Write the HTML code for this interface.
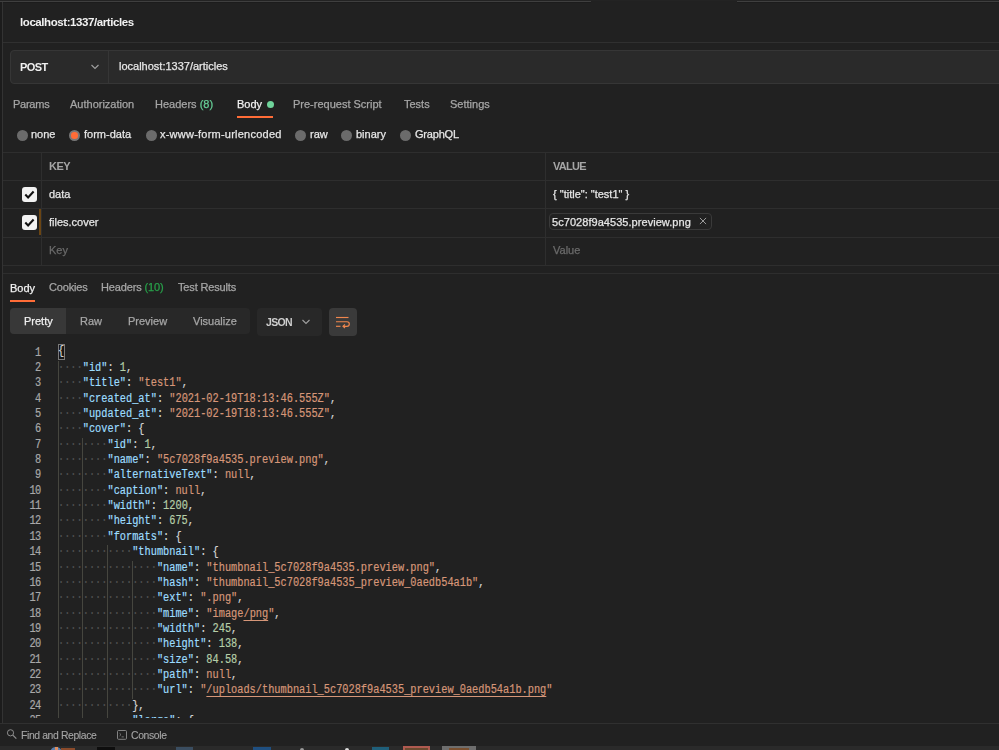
<!DOCTYPE html>
<html><head><meta charset="utf-8">
<style>
*{box-sizing:border-box;margin:0;padding:0}
html,body{width:999px;height:750px;overflow:hidden;background:#212121;font-family:"Liberation Sans",sans-serif;font-size:11px;color:#e6e6e6;-webkit-text-stroke:0.25px currentColor}
.a{position:absolute;white-space:pre}
.hl{position:absolute;height:1px;background:#2e2e2e}
.vl{position:absolute;width:1px;background:#2e2e2e}
.tab{position:absolute;top:97px;line-height:14px;color:#a6a6a6}
.radio{position:absolute;top:129.7px;width:11px;height:11px;border-radius:50%;background:#6b6b6b}
.rl{position:absolute;top:127px;line-height:14px;color:#e6e6e6}
.cb{position:absolute;left:22px;width:15px;height:15px;border-radius:3px;background:#f2f2f2}
.code{position:absolute;left:0;top:339.5px;width:999px;height:378.5px;overflow:hidden;font-family:"Liberation Mono",monospace;font-size:12px;-webkit-text-stroke:0.2px currentColor}
.ln{position:absolute;left:0;width:40.5px;text-align:right;color:#a8a8a8;height:15.36px;line-height:15.36px;letter-spacing:-0.9px;transform:scaleX(0.86);transform-origin:39.5px 0;margin-left:-0.5px}
.cl{position:absolute;left:58px;height:15.36px;line-height:15.36px;white-space:pre;color:#d4d4d4;transform:scaleX(0.8583);transform-origin:0 0}
.k{color:#9cdcfe}.s{color:#d69678}.n{color:#b5cea8}.w{color:#505050}
.u{text-decoration:underline;text-decoration-color:#d69678;text-underline-offset:2.5px}
body>div.a,body>div.tab,body>div.rl{will-change:transform}
.g{position:absolute;width:1px;background:#46463f}
</style></head><body>
<!-- top tab strip line -->
<div class="hl" style="left:0;top:0;width:999px;background:#232323"></div>
<div class="hl" style="left:0;top:1px;width:591px;background:#3f3f3f"></div>
<div class="hl" style="left:0;top:2px;width:591px;background:#1c1c1c"></div>
<div class="hl" style="left:737px;top:1px;width:262px;background:#3f3f3f"></div>
<div class="hl" style="left:737px;top:2px;width:262px;background:#1c1c1c"></div>
<!-- left border -->
<div class="vl" style="left:0;top:2px;width:2px;height:721px;background:#1c1c1c"></div>
<div class="vl" style="left:2px;top:2px;height:721px;background:#333"></div>

<!-- header -->
<div class="a" style="left:19.5px;top:14.5px;font-weight:bold;-webkit-text-stroke:0;font-size:11.5px;line-height:14px;color:#f2f2f2;letter-spacing:-0.42px">localhost:1337/articles</div>
<div class="hl" style="left:3px;top:42px;width:996px;background:#303030"></div>

<!-- request bar -->
<div class="a" style="left:10px;top:50px;width:1000px;height:34px;border:1px solid #363636;border-radius:4px;background:#2a2a2a"></div>
<div class="vl" style="left:108px;top:51px;height:32px;background:#363636"></div>
<div class="a" style="left:19.5px;top:59.5px;font-weight:bold;-webkit-text-stroke:0;line-height:14px;color:#f0f0f0;letter-spacing:-0.6px">POST</div>
<svg class="a" style="left:90px;top:62.7px" width="10" height="8" viewBox="0 0 10 8"><path d="M1.5 2 L5 5.5 L8.5 2" fill="none" stroke="#a0a0a0" stroke-width="1.1"/></svg>
<div class="a" style="left:118.5px;top:59px;line-height:14px;color:#e6e6e6">localhost:1337/articles</div>

<!-- request tabs -->
<div class="tab" style="left:13.3px;letter-spacing:-0.25px">Params</div>
<div class="tab" style="left:70px">Authorization</div>
<div class="tab" style="left:155px">Headers <span style="color:#66cf96">(8)</span></div>
<div class="tab" style="left:237px;color:#f0f0f0">Body</div>
<div class="a" style="left:266.5px;top:100.5px;width:7px;height:7px;border-radius:50%;background:#6fd49b"></div>
<div class="a" style="left:237px;top:116px;width:36px;height:2px;background:#ff6c37"></div>
<div class="tab" style="left:293px">Pre-request Script</div>
<div class="tab" style="left:403.5px">Tests</div>
<div class="tab" style="left:449.8px">Settings</div>

<!-- body type radios -->
<div class="radio" style="left:16.5px"></div><div class="rl" style="left:31px">none</div>
<div class="radio" style="left:69.1px;background:#777"></div><div class="a" style="left:72px;top:132px;width:4px;height:4px"></div>
<div class="a" style="left:71.3px;top:131.9px;width:6.6px;height:6.6px;border-radius:50%;background:#ff6c37"></div>
<div class="rl" style="left:84px">form-data</div>
<div class="radio" style="left:145.5px"></div><div class="rl" style="left:160px;letter-spacing:0.23px">x-www-form-urlencoded</div>
<div class="radio" style="left:294.9px"></div><div class="rl" style="left:310px">raw</div>
<div class="radio" style="left:341.2px"></div><div class="rl" style="left:356px">binary</div>
<div class="radio" style="left:399.5px"></div><div class="rl" style="left:415px;letter-spacing:-0.2px">GraphQL</div>

<!-- table -->
<div class="hl" style="left:3px;top:152px;width:996px"></div>
<div class="hl" style="left:3px;top:180px;width:996px"></div>
<div class="hl" style="left:3px;top:208px;width:996px"></div>
<div class="hl" style="left:3px;top:237px;width:996px"></div>
<div class="hl" style="left:3px;top:265px;width:996px"></div>
<div class="vl" style="left:41px;top:152px;height:113px"></div>
<div class="vl" style="left:545px;top:152px;height:113px"></div>
<div class="a" style="left:48.5px;top:159px;line-height:14px;font-weight:bold;-webkit-text-stroke:0;color:#a6a6a6;letter-spacing:-0.5px">KEY</div>
<div class="a" style="left:552.5px;top:159px;line-height:14px;font-weight:bold;-webkit-text-stroke:0;color:#a6a6a6;letter-spacing:-0.7px">VALUE</div>
<div class="cb" style="top:187px"></div><svg class="a" style="left:22px;top:187px" width="15" height="15" viewBox="0 0 15 15"><path d="M3.3 7.6 L6.1 10.4 L11.6 4.5" fill="none" stroke="#111" stroke-width="2.1"/></svg>
<div class="cb" style="top:215px"></div><svg class="a" style="left:22px;top:215px" width="15" height="15" viewBox="0 0 15 15"><path d="M3.3 7.6 L6.1 10.4 L11.6 4.5" fill="none" stroke="#111" stroke-width="2.1"/></svg>
<div class="a" style="left:39px;top:209px;width:2px;height:26px;background:#6b4513"></div>
<div class="a" style="left:49.3px;top:187px;line-height:14px">data</div>
<div class="a" style="left:49.3px;top:215px;line-height:14px">files.cover</div>
<div class="a" style="left:49.3px;top:243px;line-height:14px;color:#6b6b6b">Key</div>
<div class="a" style="left:552.8px;top:187px;line-height:14px">{ "title": "test1" }</div>
<div class="a" style="left:549px;top:213px;width:163px;height:17px;border:1px solid #3a3a3a;border-radius:4px"></div>
<div class="a" style="left:551.8px;top:215px;line-height:14px;letter-spacing:0.05px">5c7028f9a4535.preview.png</div>
<svg class="a" style="left:698.5px;top:217px" width="8" height="8" viewBox="0 0 8 8"><path d="M0.9 0.9 L7.1 7.1 M7.1 0.9 L0.9 7.1" stroke="#b0b0b0" stroke-width="0.85"/></svg>
<div class="a" style="left:553px;top:243px;line-height:14px;color:#6b6b6b">Value</div>
<div class="hl" style="left:3px;top:273px;width:996px"></div>

<!-- response tabs -->
<div class="tab" style="left:10px;top:280.6px;color:#f0f0f0">Body</div>
<div class="a" style="left:10px;top:300px;width:25px;height:2px;background:#ff6c37"></div>
<div class="tab" style="left:48.5px;top:280.25px;letter-spacing:-0.15px">Cookies</div>
<div class="tab" style="left:101px;top:280.25px;letter-spacing:-0.15px">Headers <span style="color:#28a04a">(10)</span></div>
<div class="tab" style="left:178px;top:280.25px;letter-spacing:-0.15px">Test Results</div>


<!-- segmented control -->
<div class="a" style="left:10px;top:308px;width:240px;height:26px;border-radius:4px;background:#282828"></div>
<div class="a" style="left:10px;top:308px;width:56px;height:26px;border-radius:4px 0 0 4px;background:#383838"></div>
<div class="a" style="left:24px;top:314px;line-height:14px;color:#f0f0f0">Pretty</div>
<div class="a" style="left:80px;top:314px;line-height:14px;color:#a6a6a6">Raw</div>
<div class="a" style="left:128px;top:314px;line-height:14px;color:#a6a6a6">Preview</div>
<div class="a" style="left:193px;top:314px;line-height:14px;color:#a6a6a6">Visualize</div>
<!-- JSON dropdown -->
<div class="a" style="left:257px;top:308px;width:65px;height:28px;border-radius:4px;background:#282828"></div>
<div class="a" style="left:266px;top:315px;line-height:14px;font-weight:bold;-webkit-text-stroke:0;color:#cfcfcf;font-size:10.5px;letter-spacing:-0.7px">JSON</div>
<svg class="a" style="left:301px;top:318px" width="10" height="8" viewBox="0 0 10 8"><path d="M1.5 2 L5 5.5 L8.5 2" fill="none" stroke="#a0a0a0" stroke-width="1.1"/></svg>
<!-- wrap button -->
<div class="a" style="left:328.5px;top:308px;width:27.5px;height:28px;border-radius:4px;background:#3a3a3a"></div>
<svg class="a" style="left:328px;top:308px" width="28" height="27" viewBox="0 0 28 27"><g fill="none" stroke="#f0874e" stroke-width="1.15"><path d="M8 9.5 H20.5"/><path d="M8 13.7 H19 a2.3 2.3 0 0 1 0 4.6 H15.5"/><path d="M17 16.5 L15 18.3 L17 20"/><path d="M8 18.3 H12.5"/></g></svg>

<!-- code -->
<div class="code" id="code">
<div class="a" style="left:58px;top:4.5px;width:6.5px;height:16px;border:1px solid #7a7a7a;background:#161616"></div>
<div class="ln" style="top:6.00px">1</div>
<div class="cl" style="top:6.00px"><span style="position:relative;top:-1.5px">{</span></div>
<div class="ln" style="top:21.36px">2</div>
<div class="cl" style="top:21.36px"><span class="w">····</span><span class="k">"id"</span>: <span class="n">1</span>,</div>
<div class="ln" style="top:36.72px">3</div>
<div class="cl" style="top:36.72px"><span class="w">····</span><span class="k">"title"</span>: <span class="s">"test1"</span>,</div>
<div class="ln" style="top:52.08px">4</div>
<div class="cl" style="top:52.08px"><span class="w">····</span><span class="k">"created_at"</span>: <span class="s">"2021-02-19T18:13:46.555Z"</span>,</div>
<div class="ln" style="top:67.44px">5</div>
<div class="cl" style="top:67.44px"><span class="w">····</span><span class="k">"updated_at"</span>: <span class="s">"2021-02-19T18:13:46.555Z"</span>,</div>
<div class="ln" style="top:82.80px">6</div>
<div class="cl" style="top:82.80px"><span class="w">····</span><span class="k">"cover"</span>: {</div>
<div class="ln" style="top:98.16px">7</div>
<div class="cl" style="top:98.16px"><span class="w">········</span><span class="k">"id"</span>: <span class="n">1</span>,</div>
<div class="ln" style="top:113.52px">8</div>
<div class="cl" style="top:113.52px"><span class="w">········</span><span class="k">"name"</span>: <span class="s">"5c7028f9a4535.preview.png"</span>,</div>
<div class="ln" style="top:128.88px">9</div>
<div class="cl" style="top:128.88px"><span class="w">········</span><span class="k">"alternativeText"</span>: <span class="s">null</span>,</div>
<div class="ln" style="top:144.24px">10</div>
<div class="cl" style="top:144.24px"><span class="w">········</span><span class="k">"caption"</span>: <span class="s">null</span>,</div>
<div class="ln" style="top:159.60px">11</div>
<div class="cl" style="top:159.60px"><span class="w">········</span><span class="k">"width"</span>: <span class="n">1200</span>,</div>
<div class="ln" style="top:174.96px">12</div>
<div class="cl" style="top:174.96px"><span class="w">········</span><span class="k">"height"</span>: <span class="n">675</span>,</div>
<div class="ln" style="top:190.32px">13</div>
<div class="cl" style="top:190.32px"><span class="w">········</span><span class="k">"formats"</span>: {</div>
<div class="ln" style="top:205.68px">14</div>
<div class="cl" style="top:205.68px"><span class="w">············</span><span class="k">"thumbnail"</span>: {</div>
<div class="ln" style="top:221.04px">15</div>
<div class="cl" style="top:221.04px"><span class="w">················</span><span class="k">"name"</span>: <span class="s">"thumbnail_5c7028f9a4535.preview.png"</span>,</div>
<div class="ln" style="top:236.40px">16</div>
<div class="cl" style="top:236.40px"><span class="w">················</span><span class="k">"hash"</span>: <span class="s">"thumbnail_5c7028f9a4535_preview_0aedb54a1b"</span>,</div>
<div class="ln" style="top:251.76px">17</div>
<div class="cl" style="top:251.76px"><span class="w">················</span><span class="k">"ext"</span>: <span class="s">".png"</span>,</div>
<div class="ln" style="top:267.12px">18</div>
<div class="cl" style="top:267.12px"><span class="w">················</span><span class="k">"mime"</span>: <span class="s">"image</span><span class="s u">/png</span><span class="s">"</span>,</div>
<div class="ln" style="top:282.48px">19</div>
<div class="cl" style="top:282.48px"><span class="w">················</span><span class="k">"width"</span>: <span class="n">245</span>,</div>
<div class="ln" style="top:297.84px">20</div>
<div class="cl" style="top:297.84px"><span class="w">················</span><span class="k">"height"</span>: <span class="n">138</span>,</div>
<div class="ln" style="top:313.20px">21</div>
<div class="cl" style="top:313.20px"><span class="w">················</span><span class="k">"size"</span>: <span class="n">84.58</span>,</div>
<div class="ln" style="top:328.56px">22</div>
<div class="cl" style="top:328.56px"><span class="w">················</span><span class="k">"path"</span>: <span class="s">null</span>,</div>
<div class="ln" style="top:343.92px">23</div>
<div class="cl" style="top:343.92px"><span class="w">················</span><span class="k">"url"</span>: <span class="s">"</span><span class="s u">/uploads/thumbnail_5c7028f9a4535_preview_0aedb54a1b.png</span><span class="s">"</span></div>
<div class="ln" style="top:359.28px">24</div>
<div class="cl" style="top:359.28px"><span class="w">············</span>},</div>
<div class="ln" style="top:374.64px">25</div>
<div class="cl" style="top:374.64px"><span class="w">············</span><span class="k">"large"</span>: {</div>
<div class="g" style="left:57.6px;top:21.36px;height:368.64px"></div>
<div class="g" style="left:82.3px;top:98.16px;height:291.84px"></div>
<div class="g" style="left:107.0px;top:205.68px;height:184.32px"></div>
<div class="g" style="left:131.8px;top:221.04px;height:138.24px"></div>
</div><!--/code-->

<!-- status bar -->
<div class="hl" style="left:0;top:723px;width:999px;background:#303030"></div>
<svg class="a" style="left:6px;top:728px" width="12" height="12" viewBox="0 0 12 12"><circle cx="4.5" cy="4.8" r="3.1" fill="none" stroke="#8e8e8e" stroke-width="1"/><path d="M6.8 7.1 L10.3 10.6" stroke="#8e8e8e" stroke-width="1.2"/></svg>
<svg class="a" style="left:117px;top:730px" width="11" height="11" viewBox="0 0 11 11"><rect x="0.5" y="0.5" width="9" height="8.8" rx="1" fill="none" stroke="#8e8e8e" stroke-width="0.9"/><path d="M2.6 3.3 L4 4.6 L2.6 5.9 M4.6 6.9 H6.8" fill="none" stroke="#8e8e8e" stroke-width="0.8"/></svg>
<div class="a" style="left:20.5px;top:729px;line-height:14px;color:#a6a6a6;font-size:10.4px;letter-spacing:-0.38px;-webkit-text-stroke:0.1px currentColor">Find and Replace</div>
<div class="a" style="left:130.5px;top:729px;line-height:14px;color:#a6a6a6;font-size:10.4px;letter-spacing:-0.35px;-webkit-text-stroke:0.1px currentColor">Console</div>
<div class="a" style="left:0;top:746px;width:999px;height:4px;background:#2a2a2a"></div>
<div class="a" style="left:51px;top:747px;width:10px;height:6px;border-radius:50%;background:#5a7fb0"></div>
<div class="a" style="left:55px;top:747px;width:3px;height:3px;background:#e09060"></div>
<div class="a" style="left:61px;top:748px;width:14px;height:2px;background:#8a4a2a"></div>
<div class="a" style="left:97px;top:747px;width:18px;height:3px;background:#0e0e0e"></div>
<div class="a" style="left:176px;top:747px;width:17px;height:3px;background:#3a4d60"></div>
<div class="a" style="left:253px;top:747px;width:18px;height:3px;background:#1f4f80"></div>
<div class="a" style="left:300px;top:748px;width:4px;height:2px;border-radius:2px 2px 0 0;background:#9a9a9a"></div>
<div class="a" style="left:345px;top:748px;width:4px;height:2px;border-radius:2px 2px 0 0;background:#dddddd"></div>
<div class="a" style="left:372px;top:747px;width:17px;height:3px;background:#1f5f7a"></div>
<div class="a" style="left:403px;top:746px;width:27px;height:4px;background:#b05a50"></div>
<div class="a" style="left:405px;top:748px;width:23px;height:2px;background:#6a4a30"></div>
<div class="a" style="left:442px;top:746px;width:34px;height:4px;background:#6e6e6e"></div>
<div class="a" style="left:449px;top:748px;width:20px;height:2px;background:#7a5030"></div>
</body></html>
